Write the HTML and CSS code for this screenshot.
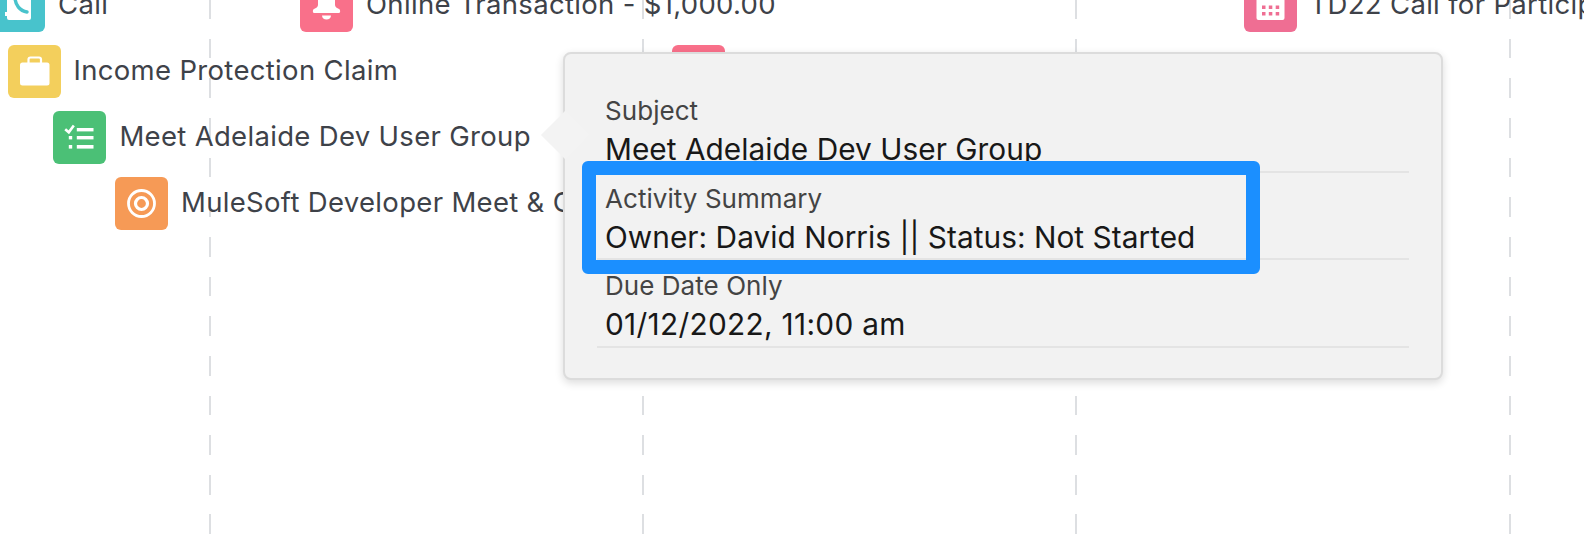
FILE: index.html
```html
<!DOCTYPE html>
<html lang="en">
<head>
<meta charset="utf-8">
<title>Timeline</title>
<link rel="stylesheet" href="styles.css">
</head>
<body>
<main class="timeline">
  <div class="grid-line grid-a"></div>
  <div class="grid-line grid-b"></div>
  <div class="grid-line grid-c"></div>
  <div class="grid-line grid-d"></div>

  <div class="item item-call">
    <span class="icon teal"><svg viewBox="0 0 53 53"><path fill="#fff" d="M17 0H37a2 2 0 0 1 2 2V39a2 2 0 0 1-2 2H17a2 2 0 0 1-2-2V37H13V33H15V21H13V17H15V0Z"/><path fill="none" stroke="#48c3cc" stroke-width="3.4" stroke-linecap="round" d="M23 18C23 26 28 32 35 33"/></svg></span>
    <span class="label">Call</span>
  </div>
  <div class="item item-transaction">
    <span class="icon rose"><svg viewBox="0 0 53 53"><path fill="#fff" d="M18 14H35V26C35 28 37 29 39 30C40.500 30.700 40.500 34 39 34H14C12.500 34 12.500 30.700 14 30C16 29 18 28 18 26Z"/><path fill="#fff" d="M22 36.500H31C31 39 29 40.500 26.500 40.500S22 39 22 36.500Z"/></svg></span>
    <span class="label">Online Transaction - $1,000.00</span>
  </div>
  <div class="item item-td22">
    <span class="icon pink"><svg viewBox="0 0 53 53"><path fill="#fff" d="M12.500 18H40.500V39A2 2 0 0 1 38.500 41H14.500A2 2 0 0 1 12.500 39Z"/><g fill="#ef6e93"><rect x="18" y="26.500" width="3.500" height="3.500"/><rect x="24.800" y="26.500" width="3.500" height="3.500"/><rect x="31.700" y="26.500" width="3.500" height="3.500"/><rect x="18" y="33" width="3.500" height="3.500"/><rect x="24.800" y="33" width="3.500" height="3.500"/><rect x="31.700" y="33" width="3.500" height="3.500"/></g></svg></span>
    <span class="label">TD22 Call for Participants</span>
  </div>
  <div class="item item-claim">
    <span class="icon yellow"><svg viewBox="0 0 53 53"><path fill="none" stroke="#fff" stroke-width="2.200" d="M20.500 18V14.500A2 2 0 0 1 22.500 12.500H31A2 2 0 0 1 33 14.500V18"/><rect x="12" y="17.500" width="29.500" height="23" rx="2.500" fill="#fff"/></svg></span>
    <span class="label">Income Protection Claim</span>
  </div>
  <div class="item item-bell">
    <span class="icon rose"></span>
  </div>
  <div class="item item-meet">
    <span class="icon green"><svg viewBox="0 0 53 53"><path fill="none" stroke="#fff" stroke-width="2.600" d="M12.200 18.200L15.800 21.300L20.800 14.500"/><g fill="#fff"><rect x="23.800" y="17" width="16.700" height="3.400"/><rect x="23.800" y="25" width="16.700" height="3.400"/><rect x="23.800" y="34" width="16.700" height="3.600"/><rect x="15.800" y="25" width="3.400" height="3.400"/><rect x="15.800" y="34" width="3.400" height="3.600"/></g></svg></span>
    <span class="label">Meet Adelaide Dev User Group</span>
  </div>
  <div class="item item-mule">
    <span class="icon orange"><svg viewBox="0 0 53 53"><g fill="none" stroke="#fff"><circle cx="26.500" cy="26.500" r="13" stroke-width="2.800"/><circle cx="26.500" cy="26.500" r="6" stroke-width="3.200"/></g></svg></span>
    <span class="label">MuleSoft Developer Meet &amp; Greet</span>
  </div>

  <aside class="popover">
    <span class="arrow"></span>
    <div class="field">
      <div class="field-label">Subject</div>
      <div class="field-value">Meet Adelaide Dev User Group</div>
    </div>
    <div class="field">
      <div class="field-label">Activity Summary</div>
      <div class="field-value">Owner: David Norris || Status: Not Started</div>
    </div>
    <div class="field">
      <div class="field-label">Due Date Only</div>
      <div class="field-value field-date">01/12/2022, 11:00 am</div>
    </div>
    <div class="highlight"></div>
  </aside>
</main>
</body>
</html>
```

FILE: styles.css
```css
* { box-sizing: border-box; }

html, body {
  margin: 0;
  height: 100%;
  background: #fff;
}

.timeline {
  position: relative;
  width: 1584px;
  height: 554px;
  overflow: hidden;
  font-family: Inter, "Liberation Sans", sans-serif;
}

.grid-line {
  position: absolute;
  top: -1.500px;
  bottom: 0;
  width: 2px;
  background: repeating-linear-gradient(to bottom, #dddfe2 0 19.800px, transparent 19.800px 39.650px);
}
.grid-a { left: 209px; }
.grid-b { left: 642px; }
.grid-c { left: 1075px; }
.grid-d { left: 1509px; }

.item {
  position: absolute;
  display: flex;
  align-items: center;
  gap: 13px;
  height: 53px;
  white-space: nowrap;
}
.item-call { left: -8px; top: -21px; }
.item-transaction { left: 300px; top: -21px; }
.item-td22 { left: 1243.5px; top: -21px; }
.item-claim { left: 7.5px; top: 45px; }
.item-bell { left: 671.5px; top: 45px; }
.item-meet { left: 53.400px; top: 111px; }
.item-mule { left: 115px; top: 177px; }

.icon {
  flex: none;
  width: 53px;
  height: 53px;
  border-radius: 6px;
}
.icon svg { display: block; width: 53px; height: 53px; }
.teal { background: #48c3cc; }
.rose { background: #f9708a; }
.pink { background: #ef6e93; }
.yellow { background: #f3cf5c; }
.green { background: #4bc076; }
.orange { background: #f69a56; }

.label {
  font-size: 27.500px;
  letter-spacing: 0.320px;
  line-height: 36px;
  color: #3e4249;
  position: relative;
  top: -2px;
}

.popover {
  position: absolute;
  left: 563px;
  top: 52px;
  width: 880px;
  height: 328px;
  padding: 31px 32px 0;
  background: #f2f2f2;
  border: 2px solid #dcdcdc;
  border-radius: 8px;
  box-shadow: 0 3px 8px rgba(0, 0, 0, 0.14);
}

.arrow {
  position: absolute;
  left: -17px;
  top: 64px;
  width: 34px;
  height: 34px;
  background: #f3f3f3;
  transform: rotate(45deg);
}

.field {
  position: relative;
  height: 87.500px;
  padding-left: 8px;
  border-bottom: 2px solid #e4e4e4;
}
.field-label {
  font-size: 26px;
  letter-spacing: 0.050px;
  line-height: 36px;
  color: #444;
  padding-top: 8px;
  height: 44px;
}
.field-value {
  font-size: 29.800px;
  letter-spacing: 0.040px;
  line-height: 40px;
  color: #181818;
}
.field-date { letter-spacing: 0.300px; }

.highlight {
  position: absolute;
  left: 17px;
  top: 107px;
  width: 678px;
  height: 113px;
  border: 14px solid #1b8fff;
  border-radius: 6px;
}
```
